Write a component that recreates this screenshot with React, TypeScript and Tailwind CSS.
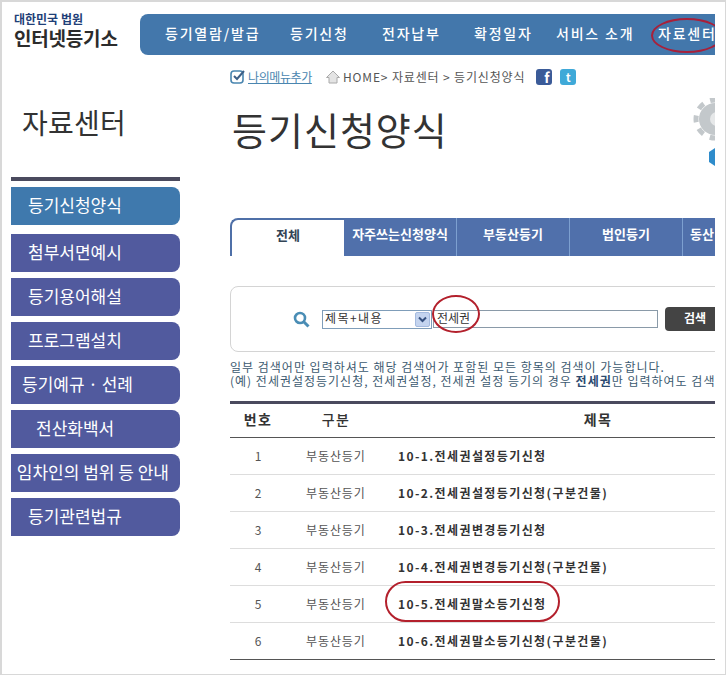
import React from 'react';

const FONT = "font-['Noto_Sans_CJK_KR','Liberation_Sans',sans-serif]";

const navItems = [
    { label: '등기열람/발급', cls: 'left-[25px]' },
    { label: '등기신청', cls: 'left-[150px]' },
    { label: '전자납부', cls: 'left-[242px]' },
    { label: '확정일자', cls: 'left-[334px]' },
    { label: '서비스 소개', cls: 'left-[416px]' },
    { label: '자료센터', cls: 'left-[518px]' },
];

const sideItems = [
    { label: '등기신청양식', cls: 'pl-[17px] mb-[9px] bg-[#3f79ad]' },
    { label: '첨부서면예시', cls: 'pl-[17px] mb-[6px] bg-[#515a9e]' },
    { label: '등기용어해설', cls: 'pl-[17px] mb-[6px] bg-[#515a9e]' },
    { label: '프로그램설치', cls: 'pl-[17px] mb-[6px] bg-[#515a9e]' },
    { label: '등기예규 · 선례', cls: 'pl-[11px] mb-[6px] bg-[#515a9e]' },
    { label: '전산화백서', cls: 'pl-[25px] mb-[6px] bg-[#515a9e]' },
    { label: '임차인의 범위 등 안내', cls: 'pl-0 mb-[6px] bg-[#515a9e] justify-end pr-[11px]' },
    { label: '등기관련법규', cls: 'pl-[17px] bg-[#515a9e]' },
];

const tabs = ['자주쓰는신청양식', '부동산등기', '법인등기', '동산'];

const rows = [
    '10-1.전세권설정등기신청',
    '10-2.전세권설정등기신청(구분건물)',
    '10-3.전세권변경등기신청',
    '10-4.전세권변경등기신청(구분건물)',
    '10-5.전세권말소등기신청',
    '10-6.전세권말소등기신청(구분건물)',
];

export default function App() {
    return (
        <div className={`${FONT} relative w-[726px] h-[675px] overflow-hidden bg-white border-t-2 border-l-2 border-r border-b border-[#d8d8d8] text-[#333]`}>
            {/* header */}
            <div className="flex items-start w-[714px] h-[53px]">
                <div className="w-[138px] pl-[12px] pt-[10px]">
                    <div className="text-[12px] leading-[14px] font-bold text-[#1f3f78]">대한민국 법원</div>
                    <div className="text-[19px] leading-[24px] font-bold text-[#2c2c2c] tracking-[-0.2px]">인터넷등기소</div>
                </div>
                <div className="relative mt-[12px] w-[575px] h-[41px] overflow-hidden rounded-l-lg bg-[#4377ab] text-white text-[14px] font-medium tracking-[1.8px] leading-[38px]">
                    {navItems.map((item) => (
                        <span key={item.label} className={`absolute top-0 whitespace-nowrap ${item.cls}`}>{item.label}</span>
                    ))}
                    <div className="absolute left-[511px] top-[4px] w-[72px] h-[35px] rounded-[50%] border-2 border-[#a8203a]" />
                </div>
            </div>

            {/* breadcrumb */}
            <div className="flex items-center h-[16px] mt-[14px] mb-[1px] ml-[228px] text-[12px] text-[#555]">
                <svg width="16" height="16" viewBox="0 0 16 16" className="mr-[2px]">
                    <rect x="1" y="2" width="12" height="12" rx="3" fill="none" stroke="#4a86b0" strokeWidth="1.6" />
                    <path d="M4 7l3 3 7-8" fill="none" stroke="#3d5f86" strokeWidth="2" />
                </svg>
                <span className="text-[#4a86b0] underline tracking-[-0.4px] w-[78px] whitespace-nowrap">나의메뉴추가</span>
                <svg width="14" height="14" viewBox="0 0 14 14" className="mr-[3px]">
                    <path d="M7 1L0.5 7.5H3V13H11V7.5H13.5Z" fill="#e4e4e4" stroke="#aaa" strokeWidth="1" />
                </svg>
                <span className="whitespace-nowrap tracking-[0.85px]">HOME&gt; 자료센터 &gt; 등기신청양식</span>
                <div className="ml-[11px] w-[16px] h-[16px] rounded-[3px] bg-[#3b5b98] flex items-end justify-end pr-[3px] text-white text-[14px] leading-[15px] font-bold">f</div>
                <div className="ml-[8px] w-[16px] h-[16px] rounded-[3px] bg-[#3fa9d8] flex items-center justify-center text-white text-[11px] leading-none font-bold">t</div>
            </div>

            <div className="flex">
                {/* sidebar */}
                <div className="w-[228px] shrink-0 pl-[9px]">
                    <div className="pl-[11px] pt-[17px] h-[91px] text-[28px] leading-[38px] text-[#333] tracking-[0.2px]">자료센터</div>
                    <div className="w-[169px] h-[4px] mb-[6px] bg-[#4a4a5e]" />
                    <div className="w-[169px]">
                        {sideItems.map((item) => (
                            <div key={item.label} className={`flex items-center h-[38px] pb-[4px] overflow-hidden rounded-r-lg text-white text-[17px] leading-none whitespace-nowrap ${item.cls}`}>
                                {item.label}
                            </div>
                        ))}
                    </div>
                </div>

                {/* main */}
                <div className="relative w-[485px] h-[589px] overflow-hidden">
                    <div className="h-[132px] pt-[17px] pl-[2px] text-[38px] leading-[52px] text-[#333] tracking-[1px]">등기신청양식</div>
                    <svg width="30" height="70" viewBox="0 0 30 70" className="absolute left-[460px] top-[12px]">
                        <circle cx="25" cy="21" r="16" fill="#c3c8cb" />
                        <circle cx="25" cy="21" r="19" fill="none" stroke="#c3c8cb" strokeWidth="5" strokeDasharray="7 7" />
                        <circle cx="27" cy="21" r="7" fill="#e6e8e9" />
                        <path d="M25 50L19 54V64L25 68Z" fill="#2f8ccb" />
                    </svg>

                    {/* tabs */}
                    <div className="flex h-[38px] text-[13px] font-bold leading-none">
                        <div className="flex items-center justify-center shrink-0 w-[114px] pb-[8px] rounded-tl-lg border-t-2 border-l-2 border-[#4f70a8] text-[#345] bg-white">전체</div>
                        {tabs.map((tab, i) => (
                            <div key={tab} className={`flex items-center shrink-0 w-[113px] pb-[8px] bg-[#5070ab] text-white border-r border-[#7da0d0] whitespace-nowrap ${i === 3 ? 'pl-[7px]' : 'justify-center'}`}>
                                {tab}
                            </div>
                        ))}
                    </div>

                    {/* search */}
                    <div className="flex items-center h-[66px] w-[500px] mt-[30px] pl-[62px] rounded-l-lg border border-[#d4d4d4]">
                        <svg width="17" height="17" viewBox="0 0 17 17" className="mr-[12px]">
                            <circle cx="7" cy="7" r="5" fill="none" stroke="#4a8db5" strokeWidth="2.6" />
                            <path d="M10.5 10.5L15.5 15.5" stroke="#4a8db5" strokeWidth="3" />
                        </svg>
                        <div className="flex items-center justify-between w-[110px] h-[19px] border border-[#7f9db9] pl-[2px] text-[12px] tracking-[1.4px] text-[#333] bg-white">
                            <span className="leading-none pb-[3px]">제목+내용</span>
                            <span className="flex items-center justify-center w-[15px] h-[15px] mr-[1px] rounded-[2px] bg-[#c4d4ef] border border-[#a5bbdf]">
                                <svg width="9" height="7" viewBox="0 0 9 7"><path d="M1 1.5L4.5 5 8 1.5" fill="none" stroke="#35507f" strokeWidth="2" /></svg>
                            </span>
                        </div>
                        <div className="ml-[1px] w-[225px] h-[18px] flex items-center border border-[#8a9aa8] pl-[3px] pb-[3px] text-[12px] leading-none text-[#333]">전세권</div>
                        <div className="ml-[7px] w-[60px] h-[24px] flex items-center justify-center pb-[3px] rounded-l-[4px] bg-[#444] text-white text-[12px] leading-none font-bold">검색</div>
                    </div>

                    {/* help */}
                    <div className="mt-[8px] text-[12px] leading-[14px] text-[#3c5a70] whitespace-nowrap tracking-[1px]">
                        <div>일부 검색어만 입력하셔도 해당 검색어가 포함된 모든 항목의 검색이 가능합니다.</div>
                        <div>(예) 전세권설정등기신청, 전세권설정, 전세권 설정 등기의 경우 <b className="text-[#2b4a70]">전세권</b>만 입력하여도 검색이 가능합니다.</div>
                    </div>

                    {/* table */}
                    <div className="mt-[13px] border-t-[3px] border-[#4a4a5e]">
                        <div className="grid grid-cols-[56px_100px_424px] items-center h-[34px] pb-[2px] border-b border-[#555] text-[14px] font-bold text-center text-[#333] tracking-[1.4px]">
                            <div>번호</div>
                            <div className="font-medium">구분</div>
                            <div>제목</div>
                        </div>
                        {rows.map((title, i) => (
                            <div key={title} className={`grid grid-cols-[76px_92px_317px] items-center h-[37px] text-[12px] border-b ${i === 5 ? 'border-[#555]' : 'border-[#ddd]'}`}>
                                <div className="pr-[20px] text-center text-[#555]">{i + 1}</div>
                                <div className="text-[#555] tracking-[0.9px] whitespace-nowrap">부동산등기</div>
                                <div className="font-bold text-[#333] tracking-[1.4px] whitespace-nowrap">{title}</div>
                            </div>
                        ))}
                    </div>
                </div>
            </div>

            {/* red annotation circles */}
            <div className="absolute left-[430px] top-[293px] w-[48px] h-[38px] rounded-[50%] border-2 border-[#b3202c]" />
            <div className="absolute left-[383px] top-[579px] w-[175px] h-[41px] rounded-full border-2 border-[#b3202c]" />
        </div>
    );
}
